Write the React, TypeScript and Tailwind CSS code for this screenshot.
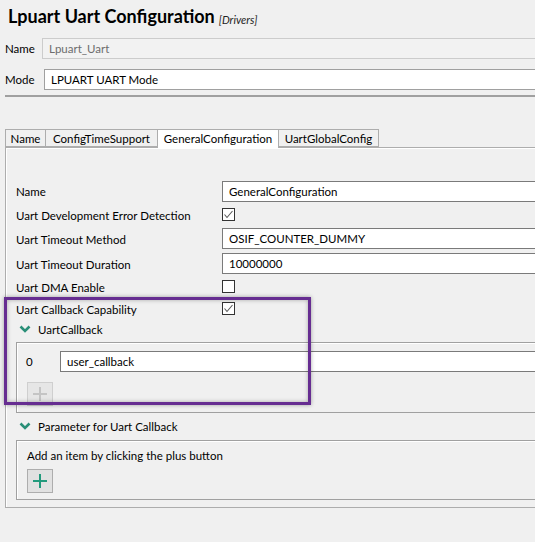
import React from "react";

const Check = ({ checked }: { checked: boolean }) => (
  <div className="w-[13px] h-[13px] border border-[#333333] bg-white flex items-center justify-center">
    {checked && (
      <svg width="11" height="11" viewBox="0 0 11 11">
        <path d="M1.5 5.5 L4 8.5 L9.5 2" fill="none" stroke="#5a5a5a" strokeWidth="1.1" />
      </svg>
    )}
  </div>
);

const Chevron = () => (
  <svg width="12" height="8" viewBox="0 0 12 8" className="shrink-0">
    <path d="M1.5 1.5 L6 6 L10.5 1.5" fill="none" stroke="#2a8f78" strokeWidth="2.6" />
  </svg>
);

const Plus = ({ enabled }: { enabled: boolean }) => (
  <div
    className={
      enabled
        ? "w-[26px] h-[24px] bg-[#e1e1e1] border border-[#adadad] flex items-center justify-center"
        : "w-[26px] h-[24px] bg-[#e6e6e6] border border-[#cfcfcf] flex items-center justify-center"
    }
  >
    <svg width="16" height="16" viewBox="0 0 16 16">
      <path d="M8 1 V15 M1 8 H15" stroke={enabled ? "#229a7c" : "#c4c4c4"} strokeWidth="2" />
    </svg>
  </div>
);

const Input = ({ value }: { value: string }) => (
  <div className="flex-1 h-[21px] border border-[#7a7a7a] bg-white flex items-center pl-[6px] pt-[1px] mr-[-20px] text-black">
    {value}
  </div>
);

const Row = ({ label, h, children }: { label: string; h: string; children: React.ReactNode }) => (
  <div className={`flex items-center ${h}`}>
    <div className="w-[206px] shrink-0 pt-[2px]">{label}</div>
    {children}
  </div>
);

export default function App() {
  return (
    <div
      className="w-[535px] h-[542px] bg-[#f0f0f0] relative overflow-hidden text-[11.5px] text-black"
      style={{ fontFamily: 'Lato, "Noto Sans", sans-serif' }}
    >
      {/* Title */}
      <div className="h-[38px] flex items-end pl-[8px] pb-[13px]">
        <span className="font-bold text-[18px] leading-none">Lpuart Uart Configuration</span>
        <span className="italic text-[11px] leading-none ml-[4px] text-[#222]">[Drivers]</span>
      </div>

      {/* Name */}
      <div className="flex items-center pl-[5px] h-[21px]">
        <span className="w-[37px] shrink-0 pt-[1px]">Name</span>
        <div className="flex-1 h-[21px] border border-[#cccccc] bg-[#f2f2f2] flex items-center pl-[6px] pt-[1px] mr-[-20px] text-[#6d6d6d]">
          Lpuart_Uart
        </div>
      </div>

      {/* Mode */}
      <div className="flex items-center pl-[5px] h-[21px] mt-[10px]">
        <span className="w-[39px] shrink-0 pt-[1px]">Mode</span>
        <div className="flex-1 h-[21px] border border-[#a0a0a0] bg-white flex items-center pl-[6px] pt-[1px] mr-[-20px]">
          LPUART UART Mode
        </div>
      </div>

      {/* Separator */}
      <div className="ml-[5px] mt-[5px] h-[2px] bg-[#a0a0a0]" />

      {/* Tabs */}
      <div className="mt-[32px] ml-[5px] flex h-[18px] items-start">
        <div className="w-[41px] h-[18px] border border-[#adadad] bg-[#f0f0f0] flex items-center justify-center pt-[1px]">Name</div>
        <div className="w-[112px] h-[18px] border-y border-r border-[#adadad] bg-[#f0f0f0] flex items-center justify-center pt-[1px]">ConfigTimeSupport</div>
        <div className="w-[121px] h-[19px] border-t border-r border-[#adadad] bg-white flex items-center justify-center relative z-10">GeneralConfiguration</div>
        <div className="w-[100px] h-[18px] border-y border-r border-[#adadad] bg-[#f0f0f0] flex items-center justify-center pt-[1px]">UartGlobalConfig</div>
      </div>

      {/* Panel */}
      <div className="ml-[5px] mr-[-10px] h-[361px] border border-[#adadad] shadow-[inset_1px_1px_0_#ffffff] pl-[10px] pr-0">
        <div className="h-[32px]" />
        <Row label="Name" h="h-[22px]">
          <Input value="GeneralConfiguration" />
        </Row>
        <Row label="Uart Development Error Detection" h="h-[25px]">
          <Check checked />
        </Row>
        <Row label="Uart Timeout Method" h="h-[23px]">
          <Input value="OSIF_COUNTER_DUMMY" />
        </Row>
        <Row label="Uart Timeout Duration" h="h-[27px]">
          <Input value="10000000" />
        </Row>
        <Row label="Uart DMA Enable" h="h-[19px]">
          <Check checked={false} />
        </Row>
        <Row label="Uart Callback Capability" h="h-[25px]">
          <Check checked />
        </Row>

        <div className="flex items-center h-[16px] pl-[3px] gap-[7px]">
          <Chevron />
          <span className="pt-[2px]">UartCallback</span>
        </div>
        <div className="mt-[5px] h-[71px] border border-[#a0a0a0] shadow-[inset_1px_1px_0_#ffffff] pl-[9px] pt-[8px]">
          <div className="flex items-center h-[21px]">
            <span className="w-[34px] shrink-0 pt-[1px]">0</span>
            <Input value="user_callback" />
          </div>
          <div className="mt-[10px] ml-[1px]">
            <Plus enabled={false} />
          </div>
        </div>

        <div className="mt-[5px] flex items-center h-[16px] pl-[3px] gap-[7px]">
          <Chevron />
          <span className="pt-[2px]">Parameter for Uart Callback</span>
        </div>
        <div className="mt-[6px] h-[60px] border border-[#a0a0a0] shadow-[inset_1px_1px_0_#ffffff] pl-[10px]">
          <div className="h-[28px] flex items-center pt-[2px]">Add an item by clicking the plus button</div>
          <div>
            <Plus enabled />
          </div>
        </div>
      </div>

      {/* Highlight overlay */}
      <div className="absolute left-[4px] top-[297px] w-[307px] h-[108px] border-[3px] border-[#662d91] shadow-[0_0_4px_rgba(0,0,0,0.35),inset_0_0_4px_rgba(0,0,0,0.3)] pointer-events-none" />
    </div>
  );
}
